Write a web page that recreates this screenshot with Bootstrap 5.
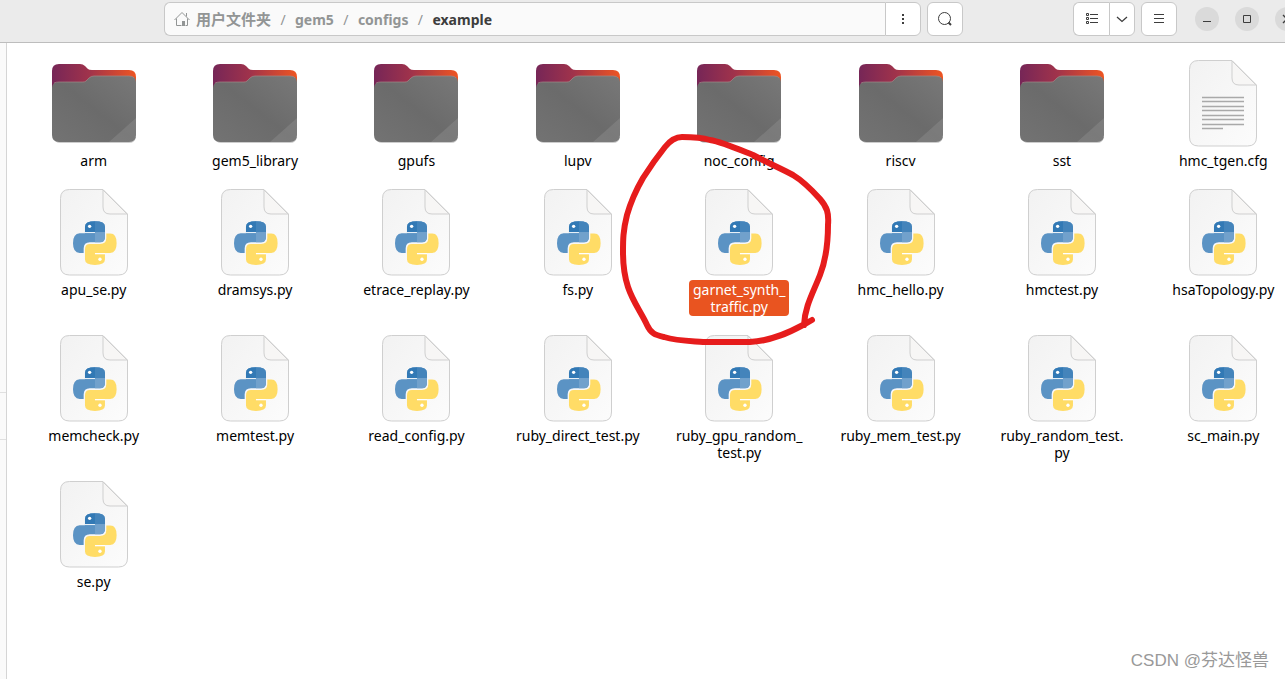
<!DOCTYPE html>
<html lang="zh-CN">
<head>
<meta charset="utf-8">
<meta name="viewport" content="width=device-width, initial-scale=1">
<title>example</title>
<link href="https://cdn.jsdelivr.net/npm/bootstrap@5.3.0/dist/css/bootstrap.min.css" rel="stylesheet">
<style>
body{font-family:"Noto Sans","Noto Sans CJK SC",sans-serif;font-size:14px;line-height:17px;color:#000;background:#fff}
.topbar{background:#ebebeb;border-bottom:1px solid #bdbdbd;height:43px;padding:2px 0 0 164px}
.tool{height:34px;border:1px solid #c8c8c8;background:#fff;border-radius:6px;color:#3d3d3d;padding:0;display:flex;align-items:center;justify-content:center}
.sq{width:36px}
.drop{width:26px}
.gap6{margin-left:6px}
.pathbar{width:721px;background:#fafafa;border:1px solid #c8c8c8;border-right:0;border-radius:6px 0 0 6px;height:34px;padding-left:9px;color:#929595;font-weight:700}
.pathbar a{color:inherit;text-decoration:none}
.pathbar svg{margin-right:6px}
.pathbar .home{font-size:15px}
.pathbar .here{color:#3d3d3d}
.pathbar .sep{width:24px;text-align:center;font-weight:400}
.right-tools{margin-right:-14px}
.wbtn{width:24px;height:24px;border:0;border-radius:50%;background:#dadada;color:#3d3d3d;padding:0;display:flex;align-items:center;justify-content:center}
.wins{gap:16px;margin-left:18px;height:34px}
.side{width:7px;background:#fafafa;border-right:1px solid #d5d5d5}
.side .strip{height:48px;margin-top:349px;border:solid #e0e0e0;border-width:1px 0}
.files{display:grid;grid-template-columns:repeat(8,1fr);row-gap:14px;margin:12px -19px 0 6px}
.entry{color:#000;text-decoration:none;display:flex;flex-direction:column;align-items:center;text-align:center}
.entry span{padding:1px 4px;border-radius:4px}
.entry.picked span{background:#e95420;color:#fff}
.scribble{left:616px;top:130px;pointer-events:none}
.sign{right:16px;bottom:8px;font:17px/20px "Liberation Sans","Noto Sans CJK SC",sans-serif;color:#999}
</style>
</head>
<body class="vh-100 overflow-hidden d-flex flex-column position-relative">
<svg width="0" height="0" class="position-absolute" aria-hidden="true">
<defs>
<linearGradient id="gb" x1="0" y1="0" x2="1" y2="0"><stop offset="0" stop-color="#762657"/><stop offset=".45" stop-color="#a1334b"/><stop offset="1" stop-color="#ee5522"/></linearGradient>
<linearGradient id="gf" x1="0" y1="1" x2="1" y2="0"><stop offset="0" stop-color="#737373"/><stop offset=".5" stop-color="#6b6b6b"/><stop offset="1" stop-color="#787878"/></linearGradient>
<linearGradient id="gp" x1="0" y1="0" x2="1" y2="1"><stop offset="0" stop-color="#f2f2f2"/><stop offset="1" stop-color="#fcfcfc"/></linearGradient>
<symbol id="folder" viewBox="0 0 96 96"><path d="M6 34V16q0-7 7-7h21q3 0 5 2l3 3q1 1 4 1h37q7 0 7 7v20H6z" fill="url(#gb)"/><path d="M7 82q2 6 7 6h69q6 0 7-6z" fill="#000" opacity=".2"/><path d="M6 33q0-6 7-6h24q2 0 3-1l3-3q2-2 5-2h35q7 0 7 6v53q0 7-7 7H13q-7 0-7-7z" fill="url(#gf)"/><path d="M8 28q2-1 5-1h24q2 0 3-1l3-3q2-2 5-2h35q4 0 5 2" fill="none" stroke="#a08a88" stroke-width=".7"/><path d="M63 87l27-24v17q0 7-7 7z" fill="#fff" opacity=".1"/></symbol>
<symbol id="page" viewBox="0 0 96 96"><path d="M23.500 5.500H57L81.500 30V82q0 9-9 9h-49q-9 0-9-9V14.500q0-9 9-9z" fill="url(#gp)" stroke="#cfcfcf"/><path d="M57 6v17q0 7 7 7h17z" fill="#f7f6f5" stroke="#cfcfcf"/></symbol>
<symbol id="text" viewBox="0 0 96 96"><use href="#page"/><path d="M27 42.500h42M27 46.500h42M27 51.500h42M27 55.500h42M27 60.500h42M27 64.500h42M27 69.500h42M27 73.500h21" stroke="#a9a9a9" stroke-width="1.500"/></symbol>
<symbol id="python" viewBox="0 0 96 96"><use href="#page"/><g transform="translate(27 37.300) scale(.333)"><path d="M36 36V16Q36 0 66 0T96 16V48Q96 63 81 63H51Q32 63 32 82V95H20Q0 95 0 66T20 36z" fill="#5b93c4"/><path d="M36 32V16Q36 0 66 0V36H36z" fill="#3279b5"/><path d="M66 0Q96 0 96 16V32H66z" fill="#4484bb"/><path d="M66 32H96V48Q96 63 81 63H66z" fill="#71a1cc"/><path d="M36 34h30" stroke="#fff" stroke-width="3"/><circle cx="50" cy="15" r="5" fill="#fff"/><path d="M100 37H112Q131 37 131 66T112 95H66V99H96V115Q96 131 66 131T36 115V84Q36 68 51 68H81Q100 68 100 50z" fill="#ffdc66"/><path d="M66 97h30" stroke="#fff" stroke-width="3"/><circle cx="81" cy="114" r="5" fill="#fff"/></g></symbol>
</defs></svg>

<header class="topbar d-flex flex-shrink-0">
<nav class="pathbar d-flex align-items-center flex-shrink-1" aria-label="Path">
<svg width="16" height="16" fill="none" stroke="currentColor"><path d="M.5 9L8 1.500 15.500 9M2.500 7.500v7h5M13.500 7.500v7h-2M12.500 5.500V2"/><path d="M8 10h3v5H8z" fill="currentColor" stroke="none"/></svg>
<a href="#" class="home">用户文件夹</a><span class="sep">/</span><a href="#">gem5</a><span class="sep">/</span><a href="#">configs</a><span class="sep">/</span><a href="#" class="here">example</a>
</nav>
<button class="tool sq rounded-start-0 flex-shrink-0" aria-label="Folder menu"><svg width="16" height="16" fill="currentColor"><path d="M7 3h2v2H7zM7 7h2v2H7zM7 11h2v2H7z"/></svg></button>
<button class="tool sq gap6 flex-shrink-0" aria-label="Search"><svg width="16" height="16" fill="none" stroke="currentColor"><circle cx="7.500" cy="7.500" r="6"/><path d="M11.500 11.500l2.500 2.500" stroke-width="2"/></svg></button>
<div class="right-tools ms-auto d-flex flex-shrink-0">
<button class="tool sq rounded-end-0 border-end-0" aria-label="List view"><svg width="16" height="16" fill="none" stroke="currentColor"><path d="M2.500 2.500h2v2h-2zM2.500 6.500h2v2h-2zM2.500 10.500h2v2h-2zM6 3.500h8M6 7.500h8M6 11.500h8"/></svg></button>
<button class="tool drop rounded-start-0" aria-label="View options"><svg width="12" height="16" fill="none" stroke="currentColor" stroke-width="1.300"><path d="M1 6l5 4.500L11 6"/></svg></button>
<button class="tool sq gap6" aria-label="Main menu"><svg width="16" height="16" stroke="currentColor"><path d="M3 3.500h10M3 7.500h10M3 11.500h10"/></svg></button>
<div class="wins d-flex align-items-center">
<button class="wbtn" aria-label="Minimize"><svg width="16" height="16" stroke="currentColor"><path d="M4 10.500h8"/></svg></button>
<button class="wbtn" aria-label="Maximize"><svg width="16" height="16" fill="none" stroke="currentColor"><path d="M4.500 4.500h7v7h-7z"/></svg></button>
<button class="wbtn" aria-label="Close"><svg width="16" height="16" stroke="currentColor" stroke-width="1.300"><path d="M4 4l8 8M12 4l-8 8"/></svg></button>
</div>
</div>
</header>
<div class="d-flex flex-grow-1">
<aside class="side flex-shrink-0"><div class="strip"></div></aside>
<main class="files flex-grow-1 align-content-start">
<a href="#" class="entry"><svg width="96" height="96"><use href="#folder"/></svg><span>arm</span></a>
<a href="#" class="entry"><svg width="96" height="96"><use href="#folder"/></svg><span>gem5_library</span></a>
<a href="#" class="entry"><svg width="96" height="96"><use href="#folder"/></svg><span>gpufs</span></a>
<a href="#" class="entry"><svg width="96" height="96"><use href="#folder"/></svg><span>lupv</span></a>
<a href="#" class="entry"><svg width="96" height="96"><use href="#folder"/></svg><span>noc_config</span></a>
<a href="#" class="entry"><svg width="96" height="96"><use href="#folder"/></svg><span>riscv</span></a>
<a href="#" class="entry"><svg width="96" height="96"><use href="#folder"/></svg><span>sst</span></a>
<a href="#" class="entry"><svg width="96" height="96"><use href="#text"/></svg><span>hmc_tgen.cfg</span></a>
<a href="#" class="entry"><svg width="96" height="96"><use href="#python"/></svg><span>apu_se.py</span></a>
<a href="#" class="entry"><svg width="96" height="96"><use href="#python"/></svg><span>dramsys.py</span></a>
<a href="#" class="entry"><svg width="96" height="96"><use href="#python"/></svg><span>etrace_replay.py</span></a>
<a href="#" class="entry"><svg width="96" height="96"><use href="#python"/></svg><span>fs.py</span></a>
<a href="#" class="entry picked"><svg width="96" height="96"><use href="#python"/></svg><span>garnet_synth_<br>traffic.py</span></a>
<a href="#" class="entry"><svg width="96" height="96"><use href="#python"/></svg><span>hmc_hello.py</span></a>
<a href="#" class="entry"><svg width="96" height="96"><use href="#python"/></svg><span>hmctest.py</span></a>
<a href="#" class="entry"><svg width="96" height="96"><use href="#python"/></svg><span>hsaTopology.py</span></a>
<a href="#" class="entry"><svg width="96" height="96"><use href="#python"/></svg><span>memcheck.py</span></a>
<a href="#" class="entry"><svg width="96" height="96"><use href="#python"/></svg><span>memtest.py</span></a>
<a href="#" class="entry"><svg width="96" height="96"><use href="#python"/></svg><span>read_config.py</span></a>
<a href="#" class="entry"><svg width="96" height="96"><use href="#python"/></svg><span>ruby_direct_test.py</span></a>
<a href="#" class="entry"><svg width="96" height="96"><use href="#python"/></svg><span>ruby_gpu_random_<br>test.py</span></a>
<a href="#" class="entry"><svg width="96" height="96"><use href="#python"/></svg><span>ruby_mem_test.py</span></a>
<a href="#" class="entry"><svg width="96" height="96"><use href="#python"/></svg><span>ruby_random_test.<br>py</span></a>
<a href="#" class="entry"><svg width="96" height="96"><use href="#python"/></svg><span>sc_main.py</span></a>
<a href="#" class="entry"><svg width="96" height="96"><use href="#python"/></svg><span>se.py</span></a>
</main>
</div>
<svg class="scribble position-absolute" width="220" height="220" viewBox="616 130 220 220" fill="none" stroke="#e61c1c" stroke-width="6" stroke-linecap="round" stroke-linejoin="round" aria-hidden="true"><path d="M804 325C805 306 813 293 820 275C827 257 828 240 828 225C829 213 827 207 820 199C811 189 803 181 793 175C780 168 768 163 753 155C738 149 722 142 710 140C700 137 690 137 682 137C674 137 669 142 665 147C657 157 650 167 643 178C636 190 631 201 627 215C623 231 623 240 623 252C623 266 624 275 628 287C633 302 641 312 647 325C651 334 656 335 664 337C677 341 690 341 703 342H750C772 341 790 332 803 325L812 320"/></svg>
<div class="sign position-absolute">CSDN @芬达怪兽</div>
<script src="https://cdn.jsdelivr.net/npm/bootstrap@5.3.0/dist/js/bootstrap.bundle.min.js"></script>
</body>
</html>
